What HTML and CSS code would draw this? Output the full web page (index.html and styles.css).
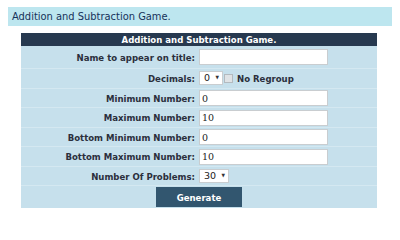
FILE: index.html
```html
<!DOCTYPE html>
<html lang="en">
<head>
    <meta charset="UTF-8">
    <meta name="viewport" content="width=device-width, initial-scale=1.0">
    <link rel="stylesheet" href="styles.css">
    <title>Addition and Subtraction Game.</title>
</head>
<body>

    <div class="titulo">Addition and Subtraction Game.</div>

    <form class="panel">
        <div class="cabecera">Addition and Subtraction Game.</div>

        <div class="fila fila-alta">
            <label for="nombre">Name to appear on title:</label>
            <input type="text" id="nombre">
        </div>
        <div class="fila fila-baja">
            <label for="decimales">Decimals:</label>
            <span class="combo"><select id="decimales"><option>0</option><option>1</option><option>2</option></select></span>
            <span class="casilla"></span>
            <label for="decimales" class="extra">No Regroup</label>
        </div>
        <div class="fila">
            <label for="minimo">Minimum Number:</label>
            <input type="text" id="minimo" value="0">
        </div>
        <div class="fila">
            <label for="maximo">Maximum Number:</label>
            <input type="text" id="maximo" value="10">
        </div>
        <div class="fila">
            <label for="bminimo">Bottom Minimum Number:</label>
            <input type="text" id="bminimo" value="0">
        </div>
        <div class="fila">
            <label for="bmaximo">Bottom Maximum Number:</label>
            <input type="text" id="bmaximo" value="10">
        </div>
        <div class="fila">
            <label for="problemas">Number Of Problems:</label>
            <span class="combo"><select id="problemas"><option>10</option><option>20</option><option selected>30</option></select></span>
        </div>
        <div class="fila-boton">
            <button type="button">Generate</button>
        </div>
    </form>

</body>
</html>
```

FILE: styles.css
```css
body {
    margin: 7px 8px;
    font-family: "DejaVu Sans Condensed", "DejaVu Sans", sans-serif;
    color: #1f2d44;
    background-color: #ffffff;
}

.titulo {
    background-color: #bde6ef;
    font-size: 11px;
    height: 19px;
    line-height: 19px;
    padding-left: 4px;
    color: #16325a;
}

.panel {
    width: 356px;
    margin: 7px 0 0 13px;
    background-color: #c6e0ec;
    padding-bottom: 1px;
}

.cabecera {
    background-color: #27394f;
    color: #ffffff;
    font-weight: bold;
    font-size: 9.5px;
    text-align: center;
    height: 13px;
    line-height: 13px;
}

.fila {
    display: grid;
    grid-template-columns: 174px auto auto 1fr;
    column-gap: 4px;
    align-items: center;
    box-sizing: border-box;
    height: 19.5px;
    border-bottom: 1px solid #d4e8f1;
}

.fila-alta {
    height: 23px;
}

.fila-baja {
    height: 19.75px;
}

.fila label {
    text-align: right;
    font-weight: bold;
    font-size: 9.5px;
    color: #2b2f3c;
}

.fila .extra {
    text-align: left;
}

input[type="text"] {
    width: 129px;
    height: 16px;
    box-sizing: border-box;
    border: 1px solid #c9cdd0;
    padding: 1px 2px;
    font-family: "DejaVu Serif", serif;
    font-size: 9.5px;
    color: #222222;
    background-color: #ffffff;
}

.combo {
    position: relative;
    display: inline-block;
    box-sizing: border-box;
    background-color: #ffffff;
    border: 1px solid #c9cdd0;
    height: 14px;
}

.combo select {
    display: block;
    appearance: none;
    -webkit-appearance: none;
    border: none;
    background: transparent;
    font-family: "DejaVu Sans", sans-serif;
    font-size: 9.5px;
    line-height: 12px;
    color: #222222;
    height: 12px;
    padding: 0 11px 0 4px;
    margin: 0;
}

.combo::after {
    content: "\25BC";
    position: absolute;
    right: 3px;
    top: 3px;
    font-size: 5px;
    line-height: 5px;
    color: #333333;
    pointer-events: none;
}

.casilla {
    width: 7px;
    height: 7px;
    border: 1px solid #b3babf;
    background-color: #dfe3e6;
    margin-left: -3px;
}

.fila-boton {
    display: flex;
    justify-content: center;
    padding-top: 1px;
}

button {
    width: 86px;
    height: 20px;
    background-color: #32566f;
    color: #ffffff;
    font-family: "DejaVu Sans Condensed", "DejaVu Sans", sans-serif;
    font-weight: bold;
    font-size: 9.5px;
    border: none;
    cursor: pointer;
}
```
